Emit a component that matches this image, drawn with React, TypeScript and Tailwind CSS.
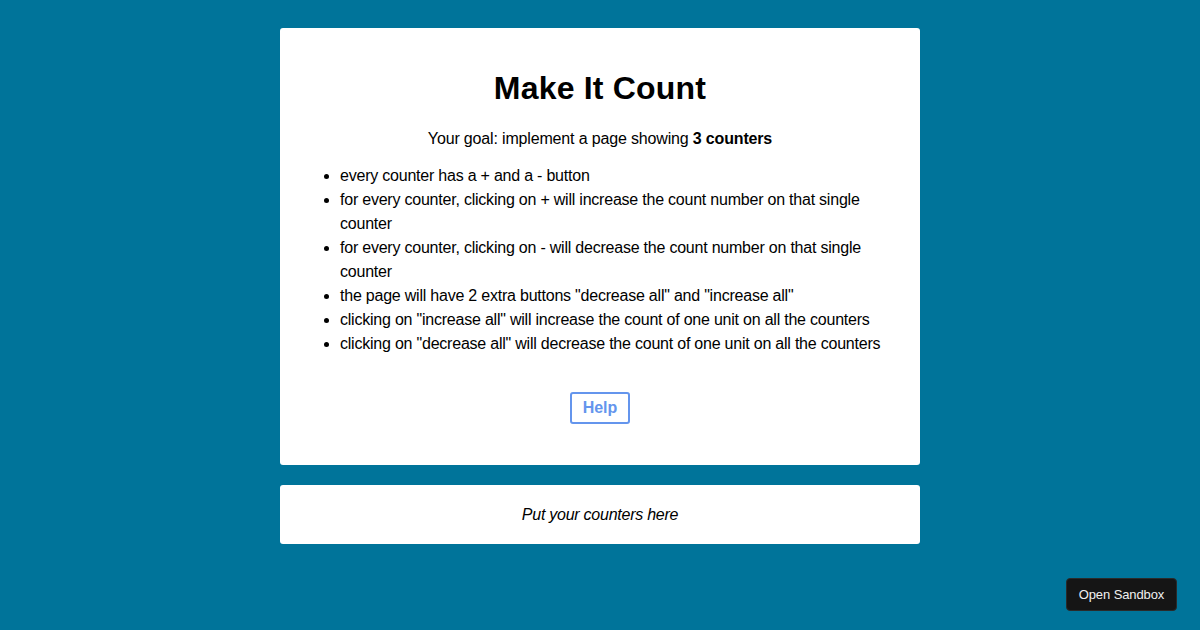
export default function App() {
  const items = [
    "every counter has a + and a - button",
    "for every counter, clicking on + will increase the count number on that single counter",
    "for every counter, clicking on - will decrease the count number on that single counter",
    'the page will have 2 extra buttons "decrease all" and "increase all"',
    'clicking on "increase all" will increase the count of one unit on all the counters',
    'clicking on "decrease all" will decrease the count of one unit on all the counters',
  ];
  return (
    <div
      className="relative w-[1200px] h-[630px] bg-[#00749a] overflow-hidden"
      style={{ fontFamily: '"Liberation Sans", Arial, sans-serif' }}
    >
      <div className="flex flex-col items-center pt-[28px] gap-[20px]">
        <div className="w-[640px] bg-white rounded-[3px] px-[20px] pt-[42px] pb-[41px] text-black">
          <h1 className="text-center text-[32px] leading-[37px] font-bold tracking-[0.2px]">Make It Count</h1>
          <p className="mt-[23px] text-center text-[16px] leading-[18px] tracking-[-0.16px]">
            Your goal: implement a page showing <b>3 counters</b>
          </p>
          <ul className="mt-[16px] list-disc pl-[40px] pr-[16px] text-[16px] leading-[24px] tracking-[-0.22px]">
            {items.map((t) => (
              <li key={t}>{t}</li>
            ))}
          </ul>
          <div className="mt-[36px] flex justify-center">
            <button className="w-[60px] h-[32px] border-2 border-[#6495ed] rounded-[3px] text-[#6495ed] font-bold text-[16px] leading-[18px] bg-white">
              Help
            </button>
          </div>
        </div>
        <div className="w-[640px] h-[59px] bg-white rounded-[3px] flex items-center justify-center">
          <span className="italic text-[16px] text-black tracking-[-0.25px]">Put your counters here</span>
        </div>
      </div>
      <div className="absolute left-[1066px] top-[578px] w-[111px] h-[33px] bg-[#151515] rounded-[4px] border border-[#2a2a2a] flex items-center justify-center text-[13px] text-[#f0f0f0] tracking-[-0.1px]">
        Open Sandbox
      </div>
    </div>
  );
}
